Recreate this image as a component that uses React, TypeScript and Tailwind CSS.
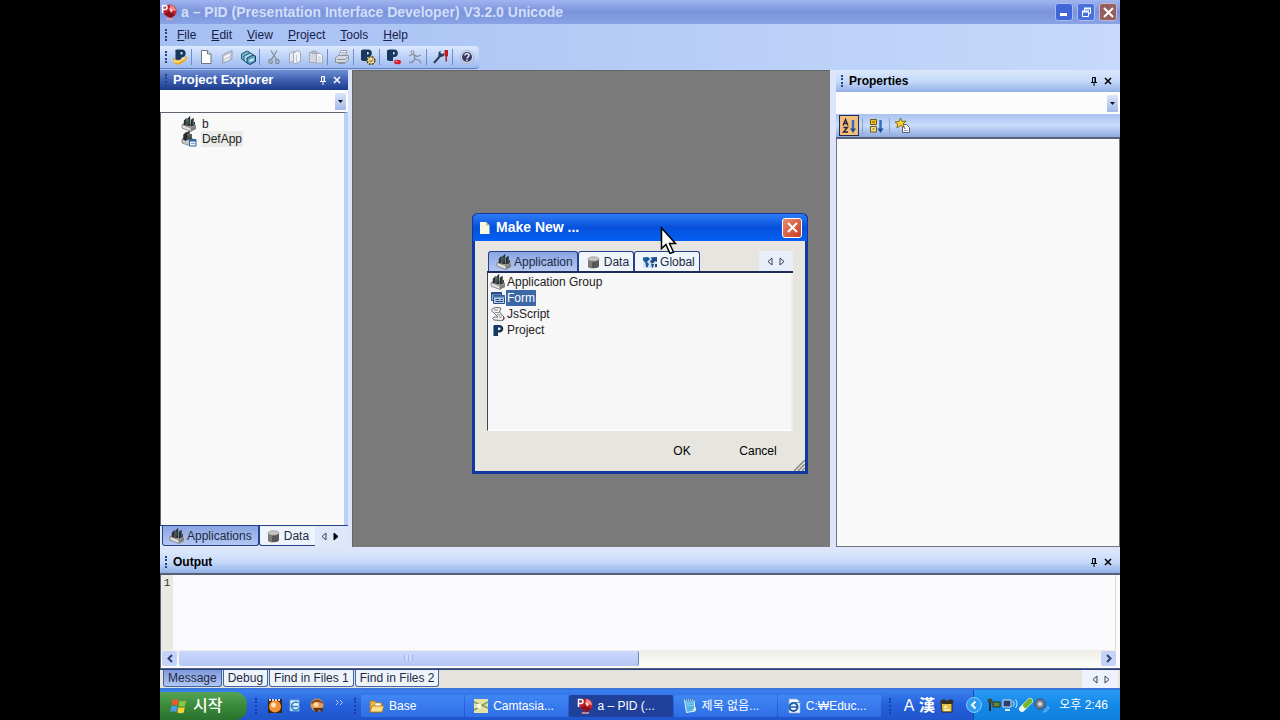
import { useState } from 'react'
import type { ReactNode } from 'react'
import clsx from 'clsx'

const MENUS = ['File', 'Edit', 'View', 'Project', 'Tools', 'Help']
const OUTPUT_TABS = ['Message', 'Debug', 'Find in Files 1', 'Find in Files 2']

function Svg({ children, size = 16 }: { children: ReactNode; size?: number }) {
  return (
    <svg width={size} height={size} viewBox="0 0 16 16" fill="none" className="shrink-0" aria-hidden="true">
      {children}
    </svg>
  )
}

// ---------- icons ----------

function PidIcon() {
  return (
    <Svg>
      <circle cx="9" cy="7" r="6.500" fill="#c4202c" />
      <path d="M9 1a6 6 0 0 1 6 6l-6-1z" fill="#f08a86" />
      <path d="M3 10l6-3 5 4-4 3z" fill="#8c0f1c" />
      <path d="M8 4l4 2-2 3z" fill="#fbd5d2" />
      <path d="M1.500 9V1.500H4a2 2 0 0 1 0 4H2" stroke="#fff" strokeWidth="1.500" />
      <path d="M5 15h7" stroke="#e9a0a0" strokeWidth="1.500" />
    </Svg>
  )
}

function PMark() {
  return (
    <path
      d="M1 1.500L3 .5h5.500c4.500 0 4.500 7.500 0 7.500H7v4H3L1 11zM7 3v2.500h1c1.300 0 1.300-2.500 0-2.500z"
      fill="#17375e"
      fillRule="evenodd"
    />
  )
}

function OpenProjectIcon() {
  return (
    <Svg>
      <path d="M1 8l3 3 6-1 4-3 1 2-3 4-6 3-4-2z" fill="#eda81c" />
      <path d="M2 12l4 1 7-4" stroke="#ffe38c" strokeWidth="1.500" />
      <path d="M3 1.500L5 .500h5c4.500 0 5 6.500 1 7.500L9 9v1.500L5 11 3 9.500zM8.500 3v2.500H10c1 0 1-2.500 0-2.500z" fill="#17375e" fillRule="evenodd" />
      <path d="M3.500 2v7.500" stroke="#5d87b8" />
    </Svg>
  )
}

function NewIcon() {
  return (
    <Svg>
      <path d="M3.500 1.500h6l3.500 3.500v9.500H3.500z" fill="#fff" stroke="#6c7486" />
      <path d="M9.500 1.500V5H13" fill="#dfe6f2" stroke="#6c7486" />
    </Svg>
  )
}

function SaveIcon() {
  return (
    <Svg>
      <path d="M3.500 6l9.500-4.500v8.500L3.500 14.500z" fill="#c3c8d4" stroke="#9da3b2" />
      <path d="M5 7.500l6-3v2.500l-6 3z" fill="#f3f5f9" />
      <path d="M5.500 12l5-2.500" stroke="#eef0f5" strokeWidth="1.500" />
    </Svg>
  )
}

function SaveAllIcon() {
  return (
    <Svg>
      <path d="M1.500 5L7 2l3 1.500V9l-5 3-3.500-2z" fill="#76b5cf" stroke="#1f5878" />
      <path d="M4 7l6-3 3 1.500V11l-5.500 3L4 12z" fill="#a8d8e8" stroke="#1f5878" />
      <path d="M7 9l6-3 2.500 1v5.500L10 15.500 7 14z" fill="#5aa3c2" stroke="#173f5c" />
      <path d="M9.500 11l4-2v2l-4 2z" fill="#e9f8fd" />
    </Svg>
  )
}

function CutIcon() {
  return (
    <Svg>
      <path d="M5 1.500l5.500 9M11 1.500l-5.500 9" stroke="#878c9b" strokeWidth="1.300" />
      <ellipse cx="4.500" cy="12.500" rx="1.700" ry="2" stroke="#878c9b" strokeWidth="1.300" />
      <ellipse cx="11.300" cy="12.500" rx="1.700" ry="2" stroke="#878c9b" strokeWidth="1.300" />
    </Svg>
  )
}

function CopyIcon() {
  return (
    <Svg>
      <path d="M2.500 4.500L7 2v9.500L2.500 14z" fill="#e4e8f0" stroke="#a3a8b6" />
      <path d="M6.500 4l4-2.500 3 2V12l-4.500 2.500H6.500z" fill="#f0f2f7" stroke="#a3a8b6" />
      <path d="M9.500 6v7" stroke="#c0c5d0" />
    </Svg>
  )
}

function PasteIcon() {
  return (
    <Svg>
      <path d="M1.500 3.500h8v10h-8z" fill="#d3d8e2" stroke="#a3a8b6" />
      <path d="M4 2h4v2.500H4z" fill="#b4b9c6" stroke="#a3a8b6" />
      <path d="M8.500 4.500h4l2 2v7.500h-6z" fill="#f5f6fa" stroke="#a3a8b6" />
      <path d="M10 8h3M10 10h3M10 12h3" stroke="#bdc2cd" />
    </Svg>
  )
}

function PrintIcon() {
  return (
    <Svg>
      <path d="M5 6.500L7 1.500h6l-1.500 5z" fill="#f5f6fa" stroke="#969baa" />
      <path d="M7.500 3.500h4M7 5h4" stroke="#a9aebb" />
      <path d="M1.500 9L4 6.500h10.500v4L12 13.500H1.500z" fill="#d3d8e2" stroke="#8f94a3" />
      <path d="M3 10.500h8.500l2-2.500" stroke="#8f94a3" />
      <path d="M4 14.500h7" stroke="#8f94a3" />
    </Svg>
  )
}

function PGearIcon() {
  return (
    <Svg>
      <PMark />
      <circle cx="11" cy="11.500" r="3.800" fill="#f0dc92" stroke="#54481f" strokeDasharray="2 1" strokeWidth="1.500" />
      <path d="M9.500 11.500l1.200 1.300L13 10.500" stroke="#54481f" />
    </Svg>
  )
}

function PStopIcon() {
  return (
    <Svg>
      <PMark />
      <ellipse cx="11.500" cy="13" rx="3.500" ry="2.300" fill="#d8202c" />
      <path d="M9.500 12.500h2" stroke="#f5a0a0" />
    </Svg>
  )
}

function RunIcon() {
  return (
    <Svg>
      <circle cx="5.500" cy="3" r="1.500" stroke="#8a90a0" />
      <path d="M2 7l4-2 4 2.500 4-1.500M7 6l1 4 4.500 1.500 1.500 3M8 10l-3 3.500H2" stroke="#8a90a0" strokeWidth="1.300" />
    </Svg>
  )
}

function ToolsIcon() {
  return (
    <Svg>
      <path d="M1 14L7.500 6.500" stroke="#2b3c5c" strokeWidth="2" />
      <path d="M5.500 7V3.500l2-2V4l1.500 1 2-1v2.500L9 8z" fill="#2b3c5c" />
      <path d="M11.500 1h3.500v6.500h-3.500z" fill="#c01c24" />
      <path d="M13.200 7.500v5" stroke="#8a2a30" strokeWidth="1.500" />
    </Svg>
  )
}

function HelpIcon() {
  return (
    <Svg>
      <circle cx="8" cy="8" r="6.500" fill="#dfe3f3" stroke="#a9b0cc" />
      <circle cx="8" cy="8" r="5" fill="#343a66" />
      <path d="M6 6.500C6 4 10 4 10 6.500 10 8 8 8 8 9.500M8 10.500V12" stroke="#fff" strokeWidth="1.400" />
    </Svg>
  )
}

function AppGroupIcon() {
  return (
    <Svg>
      <path d="M1 8l5-3 9 4v4l-5 2.500L1 12z" fill="#a9a9a9" />
      <path d="M1 8.500l9 3.500v3.500L1 12z" fill="#e2e2e2" stroke="#6f6f6f" strokeWidth=".7" />
      <path d="M10 12l5-3v4l-5 2.500z" fill="#808080" />
      <path d="M3.500 9V5L5 3.500V9.500M7 10V3l1.500-1.500V10M10.500 10.500V4L12 3v7" stroke="#252a2e" strokeWidth="1.400" />
      <path d="M13.500 6v3" stroke="#3a3f44" />
      <path d="M8 3v5" stroke="#2f7d4e" strokeWidth=".8" />
    </Svg>
  )
}

function DefAppIcon() {
  return (
    <Svg>
      <path d="M1 8l4-3 7 3v4l-4 2.500L1 12z" fill="#c6c6c6" stroke="#6f6f6f" strokeWidth=".7" />
      <path d="M3 9V4l1.500-1.500V10M6 9V2L8 1v8M10 8V3" stroke="#252a2e" strokeWidth="1.500" />
      <path d="M8.500 8.500h6.500v6.500H8.500z" fill="#e8f1fb" stroke="#36649c" />
      <path d="M8.500 9.500h6.500" stroke="#36649c" strokeWidth="2" />
      <path d="M10 12.500h4" stroke="#7ea7d8" />
    </Svg>
  )
}

function DataIcon() {
  return (
    <Svg>
      <path d="M2 5v7c0 3 11 3 11 0V5z" fill="#5a5856" />
      <path d="M2 5v7c0 1.500 2 2.300 4 2.300V6z" fill="#7d7b78" />
      <ellipse cx="7.500" cy="5" rx="5.500" ry="2.200" fill="#c9c6c0" stroke="#8f8f8f" strokeWidth=".7" />
    </Svg>
  )
}

function GlobalIcon() {
  return (
    <Svg>
      <path d="M1 3h14v11H1z" fill="#d4e6f8" />
      <path d="M1 3.500l5-.500 2 2-2 2-1 1 2 2-1.500 3.500L4 13 3.500 9 1 6z" fill="#1d5a9c" />
      <path d="M8.500 3.500L15 3v5l-2-1-1.500 2H9l-1-2 2-1.500zM9 9.500l3 .500-1 3.500-1 .500zM13 10h2v3h-2z" fill="#1c4a86" />
    </Svg>
  )
}

function FormIcon() {
  return (
    <Svg>
      <path d="M1.500 2.500h10v8h-10z" fill="#9dbadd" stroke="#294f86" />
      <path d="M1 3.500h11" stroke="#294f86" strokeWidth="2" />
      <path d="M3.500 5.500h11v8h-11z" fill="#b4cbe8" stroke="#294f86" />
      <path d="M3 6.500h12" stroke="#4673ad" strokeWidth="2" />
      <path d="M5.500 9.500h3.500M10.500 9.500H13M5.500 11.500H13" stroke="#294f86" />
    </Svg>
  )
}

function ScriptIcon() {
  return (
    <Svg>
      <path
        d="M3 2.500C5 1 9 1.500 11 2L9.500 6l4.500 5c1 3-2 4-4 3.500l-6-.500c-2-1-1-3 1-3h3L3 6C1 5 1.500 3 3 2.500z"
        fill="#f0f0f0"
        stroke="#6e6e6e"
      />
      <path d="M4 4h4M5 6.500h4M7 8.500l3.500.500M9 11h3" stroke="#8f8f8f" />
      <path d="M13 11c1.500 1 1 3-1 3.500" stroke="#444" />
    </Svg>
  )
}

function ProjectIcon() {
  return (
    <Svg>
      <path d="M4 3h5.500c5 0 5 7.500 0 7.500H8V14H4zM8 5.500V8h1.500c1.500 0 1.500-2.500 0-2.500z" fill="#17375e" fillRule="evenodd" />
      <path d="M4 3L3 4v10h1" fill="#6f8fb5" />
    </Svg>
  )
}

function SortIcon() {
  return (
    <Svg>
      <path d="M2 7.500L4.500 1.500 7 7.500M3 5.500h3M2.500 9.500h4L2.500 14h4.500" stroke="#2b2740" strokeWidth="1.400" />
      <path d="M12 2v9" stroke="#2e6fc0" strokeWidth="2.500" />
      <path d="M9 10.500h6L12 15z" fill="#1d4f9c" />
    </Svg>
  )
}

function CategoryIcon() {
  return (
    <Svg>
      <path d="M2.500 1.500h6v5h-6z" fill="#f2c21d" stroke="#735a12" />
      <path d="M4 4h3" stroke="#735a12" />
      <path d="M2.500 8.500h6v5.500h-6z" fill="#f4e08a" stroke="#735a12" />
      <path d="M4.500 11h2" stroke="#735a12" />
      <path d="M12.500 2v9" stroke="#2e6fc0" strokeWidth="2.500" />
      <path d="M9.500 10.500h6l-3 4.500z" fill="#1d4f9c" />
    </Svg>
  )
}

function StarPageIcon() {
  return (
    <Svg>
      <path d="M7.500 6.500h4l3 3v5h-7z" fill="#f6f8fc" stroke="#59617a" />
      <path d="M9 10.500h2M9 12.500h4" stroke="#9aa3b8" />
      <path d="M5.500 0l1.500 3.500 4-.500-3 3 1.500 3.500-4-2-3.500 2.500.500-4L0 4l4-.500z" fill="#f8d22c" stroke="#6b5710" strokeWidth=".8" />
    </Svg>
  )
}

function FolderIcon() {
  return (
    <Svg>
      <path d="M1 3h5l1.500 2H13v9H1z" fill="#e9b949" stroke="#a9741a" strokeWidth=".8" />
      <path d="M6 5h6v6H6z" fill="#fffbe8" stroke="#b99c56" strokeWidth=".7" />
      <path d="M3 8h12l-2 6H1z" fill="#fbe08c" stroke="#a9741a" strokeWidth=".8" />
    </Svg>
  )
}

function CamtasiaIcon() {
  return (
    <Svg>
      <path d="M1 1h14v14H1z" fill="#e6e2a4" />
      <path d="M1 4l14 6M1 12l14-8" stroke="#7f9f62" strokeWidth="1.500" />
      <circle cx="6" cy="8" r="2.500" fill="#fbf9dc" />
    </Svg>
  )
}

function NotepadIcon() {
  return (
    <Svg>
      <path d="M2.500 2h9.500l1 11-8.500 1.500z" fill="#55b4e6" stroke="#dff1fb" />
      <path d="M4 5h7M4.500 7.500h7" stroke="#8fd0f2" />
      <path d="M3 2h9" stroke="#3d5d74" strokeWidth="1.500" strokeDasharray="1 1" />
      <path d="M10 12l4-3v4z" fill="#e4f2c9" />
    </Svg>
  )
}

function ExplorerIcon() {
  return (
    <Svg>
      <path d="M3 1h8l3 3v11H3z" fill="#f4f8fd" stroke="#8fa7c4" strokeWidth=".7" />
      <circle cx="7.500" cy="9" r="4" stroke="#1a55a8" strokeWidth="2" />
      <path d="M4 9h7.500" stroke="#1a55a8" strokeWidth="1.500" />
      <path d="M1.500 13C2 8 8 3.500 14 4.500" stroke="#2b86d8" />
    </Svg>
  )
}

function Pin() {
  return (
    <svg width="8" height="9" viewBox="0 0 8 9" fill="none" aria-hidden="true">
      <path d="M2.500 5V.5h3V5M5 .5V5M1 5.500h6M4 5.500V9" stroke="currentColor" />
    </svg>
  )
}

function Cross() {
  return (
    <svg width="8" height="8" viewBox="0 0 8 8" fill="none" aria-hidden="true">
      <path d="M1 1l6 6M7 1L1 7" stroke="currentColor" strokeWidth="1.500" />
    </svg>
  )
}

function Triangle({ right, filled }: { right?: boolean; filled?: boolean }) {
  return (
    <svg width="6" height="9" viewBox="0 0 6 9" aria-hidden="true">
      <path
        d={right ? 'M1 1l4 3.500L1 8z' : 'M5 1L1 4.500 5 8z'}
        fill={filled ? '#000' : 'none'}
        stroke={filled ? '#000' : '#3a4055'}
      />
    </svg>
  )
}

function WindowsFlag() {
  return (
    <svg width="17" height="16" viewBox="0 0 17 16" aria-hidden="true">
      <path d="M2.500 2c2-1 4-1 6 0L7.500 7.500c-2-1-4-1-6 0z" fill="#f0582a" />
      <path d="M9.500 2.500c2 1 4 1 6.500 0L15 8c-2 1-4.500 1-6.500 0z" fill="#8cc63e" />
      <path d="M1.300 8.500c2-1 4-1 6 0L6.300 14c-2-1-4-1-6 0z" fill="#4a9cf0" />
      <path d="M8.300 9c2 1 4 1 6.500 0l-1 5.500c-2 1-4.500 1-6.500 0z" fill="#fbd030" />
    </svg>
  )
}

// ---------- shared pieces ----------

function Grip() {
  return <span className="h-3 shrink-0 border-l-2 border-dotted border-[#27408b]" />
}

function PanelHeader({ title, active }: { title: string; active?: boolean }) {
  return (
    <header
      className={clsx(
        'flex shrink-0 items-center pr-1 pl-[5px] font-bold',
        active
          ? 'h-5 bg-linear-to-b from-[#6f8fd2] via-[#3f60b0] to-[#1c3a8c] pr-[3px] text-[13px] text-white'
          : 'h-[22px] bg-linear-to-b from-[#dbe8fb] via-[#c6dafa] to-[#93b0e6] text-[12px] text-black',
      )}
    >
      <Grip />
      <h2 className="ml-1.5 flex-1">{title}</h2>
      <button aria-label={`Pin ${title}`} className="flex w-3 justify-center">
        <Pin />
      </button>
      <button aria-label={`Close ${title}`} className="flex w-4 justify-center">
        <Cross />
      </button>
    </header>
  )
}

function Combo({ label }: { label: string }) {
  return (
    <div className="relative h-[22px] shrink-0 bg-[#fcfcfd]">
      <select aria-label={label} className="h-full w-full appearance-none bg-transparent px-1 outline-none">
        <option />
      </select>
      <span className="pointer-events-none absolute top-[3px] right-0.5 bottom-0.5 flex w-[11px] items-center justify-center bg-linear-to-b from-[#dce6fb] to-[#a3b9ea]">
        <svg width="5" height="3" viewBox="0 0 5 3" aria-hidden="true">
          <path d="M0 0h5L2.500 3z" fill="#111" />
        </svg>
      </span>
    </div>
  )
}

const TOOLBAR = [
  [{ label: 'Open project', icon: <OpenProjectIcon /> }],
  [
    { label: 'New', icon: <NewIcon /> },
    { label: 'Save', icon: <SaveIcon /> },
    { label: 'Save all', icon: <SaveAllIcon /> },
  ],
  [
    { label: 'Cut', icon: <CutIcon /> },
    { label: 'Copy', icon: <CopyIcon /> },
    { label: 'Paste', icon: <PasteIcon /> },
  ],
  [{ label: 'Print', icon: <PrintIcon /> }],
  [{ label: 'Build', icon: <PGearIcon /> }],
  [
    { label: 'Stop', icon: <PStopIcon /> },
    { label: 'Run', icon: <RunIcon /> },
  ],
  [{ label: 'Options', icon: <ToolsIcon /> }],
  [{ label: 'About', icon: <HelpIcon /> }],
]

function TitleBar() {
  return (
    <header className="flex h-6 shrink-0 items-center bg-linear-to-b from-[#a0b4f0] via-[#7a93da] to-[#8aa4e6] pr-[3px] pl-px">
      <PidIcon />
      <h1 className="ml-1 flex-1 truncate text-[14px] font-bold text-[#d3defa]">
        a – PID (Presentation Interface Developer) V3.2.0 Unicode
      </h1>
      <div className="flex gap-1">
        <button
          aria-label="Minimize"
          className="flex h-[18px] w-[18px] items-end rounded-[3px] border border-[#a9bdf3] bg-[#4166d8] p-1"
        >
          <span className="h-[3px] w-[7px] bg-white" />
        </button>
        <button
          aria-label="Restore"
          className="flex h-[18px] w-[18px] items-center justify-center rounded-[3px] border border-[#a9bdf3] bg-[#4a70dc]"
        >
          <svg width="11" height="11" viewBox="0 0 11 11" fill="none" aria-hidden="true">
            <path d="M3.500 4V1.500h6v5H7.500M1.500 4.500h6v5h-6z" stroke="#fff" />
            <path d="M3 1.500h7M1 4.500h7" stroke="#fff" strokeWidth="2" />
          </svg>
        </button>
        <button
          aria-label="Close"
          className="flex h-[18px] w-[18px] items-center justify-center rounded-[3px] border border-[#cbb4cf] bg-[#94605f]"
        >
          <svg width="11" height="11" viewBox="0 0 11 11" aria-hidden="true">
            <path d="M1 1l9 9M10 1l-9 9" stroke="#fff" strokeWidth="2" />
          </svg>
        </button>
      </div>
    </header>
  )
}

function ProjectExplorer() {
  return (
    <section className="flex w-[188px] shrink-0 flex-col">
      <PanelHeader title="Project Explorer" active />
      <Combo label="Project" />
      <div className="flex-1 border-t border-r-4 border-l border-t-[#5e6470] border-r-[#bcd0f7] border-l-[#5e6470] bg-[#f9f9fa] pt-[3px] pl-5 text-[12px] text-[#222]">
        <ul>
          <li>
            <button className="flex h-[15px] items-center gap-1">
              <AppGroupIcon />
              <span className="px-px">b</span>
            </button>
          </li>
          <li>
            <button className="flex h-[15px] items-center gap-1">
              <DefAppIcon />
              <span className="bg-[#ecebe7] px-px leading-4">DefApp</span>
            </button>
          </li>
        </ul>
      </div>
      <div className="flex h-[22px] shrink-0 border-t border-[#27408b] bg-[#dfe7fa] pl-0.5 text-[12px]">
        <button className="flex h-5 items-center gap-0.5 rounded-b-[3px] border border-t-0 border-[#27408b] bg-linear-to-b from-[#8ba5e2] to-[#b3c7f3] px-1.5 text-[#222a44]">
          <AppGroupIcon />
          Applications
        </button>
        <button className="flex h-5 items-center gap-0.5 rounded-bl-[3px] border-b border-l border-[#27408b] bg-[#eef4fc] px-1.5 text-[#222a44]">
          <DataIcon />
          Data
        </button>
        <div className="flex flex-1 items-center gap-1.5 bg-[#dfe7fa] pl-1.5">
          <button aria-label="Previous tab">
            <Triangle />
          </button>
          <button aria-label="Next tab">
            <Triangle right filled />
          </button>
        </div>
      </div>
    </section>
  )
}

function Properties() {
  return (
    <section className="flex w-[284px] shrink-0 flex-col">
      <PanelHeader title="Properties" />
      <Combo label="Object" />
      <div className="flex h-[25px] shrink-0 items-center border-b-2 border-[#566078] bg-linear-to-b from-[#a9c2f0] via-[#c9dcfa] to-[#8eaadf] pl-[3px]">
        <button
          aria-label="Alphabetical"
          className="flex h-[21px] w-5 items-center justify-center border border-[#1f2b52] bg-[#f4bd7c]"
        >
          <SortIcon />
        </button>
        <span className="mx-[3px] h-4 w-px bg-[#8ca3cf]" />
        <button aria-label="Categorized" className="flex w-5 justify-center">
          <CategoryIcon />
        </button>
        <span className="mx-[3px] h-4 w-px bg-[#8ca3cf]" />
        <button aria-label="Property pages" className="flex w-5 justify-center">
          <StarPageIcon />
        </button>
      </div>
      <div className="flex-1 border border-t-0 border-[#70747c] bg-[#f9f9fa]" />
    </section>
  )
}

function Output() {
  const [tab, setTab] = useState('Message')

  return (
    <section className="flex shrink-0 flex-col">
      <PanelHeader title="Output" />
      <div className="border-t-2 border-b border-l border-[#566078] bg-[#faf9fb] pr-1 pb-0.5">
        <div className="flex h-[75px]">
          <div className="w-3 bg-[#e9e9e4] text-center font-['Liberation_Mono',monospace] text-[11px] leading-4 text-[#333]">
            1
          </div>
          <textarea
            aria-label="Output"
            readOnly
            className="flex-1 resize-none border-r border-[#dcdad2] bg-transparent px-1 text-[12px] outline-none"
          />
        </div>
        <div className="flex h-4 items-center bg-linear-to-b from-[#eeede5] to-[#fdfdfa] pl-px">
          <button
            aria-label="Scroll left"
            className="flex h-[15px] w-[15px] items-center justify-center rounded-xs bg-[#c5d2fa]"
          >
            <svg width="6" height="9" viewBox="0 0 6 9" fill="none" aria-hidden="true">
              <path d="M5 1L1.500 4.500 5 8" stroke="#33456e" strokeWidth="2" />
            </svg>
          </button>
          <div className="mx-0.5 flex h-full flex-1 items-center">
            <div className="flex h-[15px] w-1/2 items-center justify-center gap-px rounded-xs border-r border-[#6d86b8] bg-linear-to-b from-[#cbd8fd] to-[#b5c6f6]">
              <span className="h-1.5 w-px bg-[#a5b8ec]" />
              <span className="h-1.5 w-px bg-[#dbe5ff]" />
              <span className="h-1.5 w-px bg-[#a5b8ec]" />
              <span className="h-1.5 w-px bg-[#dbe5ff]" />
              <span className="h-1.5 w-px bg-[#a5b8ec]" />
            </div>
          </div>
          <button
            aria-label="Scroll right"
            className="flex h-[15px] w-[15px] items-center justify-center rounded-xs bg-[#c5d2fa]"
          >
            <svg width="6" height="9" viewBox="0 0 6 9" fill="none" aria-hidden="true">
              <path d="M1 1l3.500 3.500L1 8" stroke="#33456e" strokeWidth="2" />
            </svg>
          </button>
        </div>
      </div>
      <div className="flex h-[19px] gap-px border-t border-[#27408b] bg-[#e5e3dc] pr-0.5 pl-[3px] text-[12px] text-[#222a44]">
        {OUTPUT_TABS.map((name) => (
          <button
            key={name}
            onClick={() => setTab(name)}
            className={clsx(
              'h-[17px] rounded-b-[3px] border-r border-b border-l border-[#3d68a6] px-1 leading-4',
              name === tab ? 'bg-linear-to-b from-[#7f9adb] to-[#b3c7f3]' : 'bg-[#eff4fb]',
            )}
          >
            {name}
          </button>
        ))}
        <div className="ml-auto flex items-center gap-1.5 bg-[#eef2fc] pr-2 pl-2.5">
          <button aria-label="Previous output">
            <Triangle />
          </button>
          <button aria-label="Next output">
            <Triangle right />
          </button>
        </div>
      </div>
    </section>
  )
}

const DIALOG_TABS = [
  { name: 'Application', icon: <AppGroupIcon /> },
  { name: 'Data', icon: <DataIcon /> },
  { name: 'Global', icon: <GlobalIcon /> },
]

const DIALOG_ITEMS = [
  { name: 'Application Group', icon: <AppGroupIcon /> },
  { name: 'Form', icon: <FormIcon /> },
  { name: 'JsScript', icon: <ScriptIcon /> },
  { name: 'Project', icon: <ProjectIcon /> },
]

function MakeNewDialog() {
  const [tab, setTab] = useState('Application')
  const [selected, setSelected] = useState('Form')

  return (
    <div
      role="dialog"
      aria-labelledby="make-new-title"
      className="absolute top-[213px] left-1/2 w-[336px] -translate-x-1/2 rounded-t-md border-[3px] border-t-0 border-[#12389f] bg-[#e6e5df] text-[12px]"
    >
      <header className="-mx-[3px] flex h-7 items-center rounded-t-md border border-b-0 border-[#12389f] bg-linear-to-b from-[#2f7cf5] via-[#0550dc] to-[#0660f4] px-1">
        <svg width="16" height="14" viewBox="0 0 16 14" aria-hidden="true">
          <path d="M3 1h6l3.500 3.500V13H3z" fill="#f6f8e6" />
          <path d="M9 1v3.500h3.500z" fill="#b9c39a" />
        </svg>
        <h2 id="make-new-title" className="ml-[3px] flex-1 text-[14px] font-bold text-white">
          Make New ...
        </h2>
        <button
          aria-label="Close dialog"
          className="mr-px flex h-5 w-5 items-center justify-center rounded-[3px] border border-white bg-linear-to-br from-[#e88a6c] to-[#c8381c]"
        >
          <svg width="11" height="11" viewBox="0 0 11 11" aria-hidden="true">
            <path d="M1 1l9 9M10 1l-9 9" stroke="#fff" strokeWidth="2" />
          </svg>
        </button>
      </header>

      <div className="px-3 pt-2.5">
        <div className="flex items-end border-b-2 border-[#1d2c58] pl-px text-[#222a44]">
          {DIALOG_TABS.map(({ name, icon }) => (
            <button
              key={name}
              onClick={() => setTab(name)}
              className={clsx(
                'flex h-5 items-center gap-0.5 rounded-t-[3px] border border-b-0 border-[#27408b] pr-1 pl-[7px]',
                name === tab ? 'bg-linear-to-b from-[#8ba5e2] to-[#b3c7f3]' : 'bg-[#f0f4fb]',
              )}
            >
              {icon}
              {name}
            </button>
          ))}
          <div className="ml-auto flex h-5 items-center gap-1.5 bg-[#e9eefb] px-2">
            <button aria-label="Scroll tabs left">
              <Triangle />
            </button>
            <button aria-label="Scroll tabs right">
              <Triangle right />
            </button>
          </div>
        </div>
        <ul className="h-[158px] border-r-2 border-b border-l border-r-[#efeeea] border-b-white border-l-[#3e4658] bg-[#f7f7f8] pt-px pl-0.5">
          {DIALOG_ITEMS.map(({ name, icon }) => (
            <li key={name}>
              <button onClick={() => setSelected(name)} className="flex h-4 items-center">
                {icon}
                <span className={clsx('px-px leading-4', name === selected ? 'bg-[#3c68a8] text-white' : 'text-[#222]')}>
                  {name}
                </span>
              </button>
            </li>
          ))}
        </ul>
      </div>

      <footer className="relative flex h-10 items-center justify-end pr-[9px]">
        <button className="h-6 w-[76px]">OK</button>
        <button className="h-6 w-[76px]">Cancel</button>
        <svg width="11" height="11" viewBox="0 0 11 11" className="absolute right-0 bottom-0" aria-hidden="true">
          <path d="M0 11L11 0M4 11l7-7M8 11l3-3" stroke="#8a897f" strokeWidth="1.500" />
        </svg>
      </footer>
    </div>
  )
}

const TASKS = [
  { name: 'Base', icon: <FolderIcon /> },
  { name: 'Camtasia...', icon: <CamtasiaIcon /> },
  { name: 'a – PID (...', icon: <PidIcon />, active: true },
  { name: '제목 없음...', icon: <NotepadIcon /> },
  { name: 'C:₩Educ...', icon: <ExplorerIcon /> },
]

function Taskbar() {
  return (
    <footer className="flex h-8 shrink-0 items-end border-t-2 border-[#3a76dc] bg-linear-to-b from-[#3a80ee] via-[#2560dc] to-[#1f55cc] text-[12px] text-white">
      <button className="flex h-7 w-[87px] shrink-0 items-center gap-1.5 rounded-r-xl bg-linear-to-b from-[#57a457] via-[#3a8a3a] to-[#2a722e] pl-2.5 text-[16px] font-medium">
        <WindowsFlag />
        시작
      </button>
      <div className="flex h-7 w-[114px] shrink-0 items-center pl-2">
        <span className="h-4 border-l-2 border-dotted border-[#1a3f9f]" />
        <a href="#media" aria-label="Media player" className="ml-2.5">
          <Svg>
            <path d="M1 1h14v14H1z" fill="#3c2712" />
            <circle cx="8" cy="8.500" r="6" fill="#f29136" />
            <circle cx="6.500" cy="7" r="2.500" fill="#ffe4b8" />
            <path d="M2 2h12" stroke="#d8dde8" strokeWidth="2" strokeDasharray="2 1" />
          </Svg>
        </a>
        <a href="#mail" aria-label="Mail" className="ml-1">
          <Svg>
            <path d="M3 2h9v11H3z" fill="#e8f3fb" stroke="#6ba7cf" />
            <path d="M11 5a4 4 0 1 0 1 5M5 8.500h6" stroke="#2585c7" strokeWidth="1.500" />
          </Svg>
        </a>
        <a href="#messenger" aria-label="Messenger" className="ml-1.5">
          <Svg>
            <circle cx="8" cy="7" r="6.500" fill="#e59a52" />
            <path d="M2 6c1-6 11-6 12 0l-4-2z" fill="#8a4a18" />
            <path d="M4 10h10v4l-4-2-3 3z" fill="#5a3316" />
            <circle cx="7" cy="6.500" r="2.500" fill="#fbd9a8" />
          </Svg>
        </a>
        <button aria-label="More shortcuts" className="mb-2 ml-2.5">
          <svg width="9" height="5" viewBox="0 0 9 5" fill="none" aria-hidden="true">
            <path d="M1 0l2.500 2.500L1 5M5 0l2.500 2.500L5 5" stroke="#b9d3ff" />
          </svg>
        </button>
        <span className="ml-2.5 h-4 border-l-2 border-dotted border-[#1a3f9f]" />
      </div>
      <nav className="flex h-7 min-w-0 flex-1 items-center gap-px">
        {TASKS.map(({ name, icon, active }) => (
          <button
            key={name}
            className={clsx(
              'flex h-[22px] min-w-0 flex-1 items-center gap-1 rounded-xs pl-2 whitespace-nowrap',
              active ? 'bg-[#1f419c]' : 'bg-linear-to-b from-[#4086f4] to-[#2f6ee6]',
            )}
          >
            {icon}
            {name}
          </button>
        ))}
      </nav>
      <div className="flex h-7 w-[92px] shrink-0 items-center gap-0.5 pl-2">
        <span className="mr-2 h-4 border-l-2 border-dotted border-[#1a3f9f]" />
        <button className="w-4 text-[16px] font-medium">A</button>
        <button className="w-4 text-[16px] leading-4 font-bold">漢</button>
        <button aria-label="Input pad" className="ml-0.5">
          <Svg>
            <path d="M2 4h11v10H3z" fill="#e7c24c" stroke="#30280e" />
            <path d="M1 3l4-2 3 2 3-2 4 2-2 3H3z" fill="#3a3020" />
            <path d="M5 9h3M5 12h6" stroke="#fff7cf" strokeWidth="1.500" />
          </Svg>
        </button>
      </div>
      <div className="flex h-[30px] w-[147px] shrink-0 items-center border-l border-[#0f4fb0] bg-linear-to-b from-[#2a9af4] via-[#1389e8] to-[#1180dd] pr-3">
        <button aria-label="Show hidden icons" className="-ml-2">
          <Svg>
            <circle cx="8" cy="8" r="7.500" fill="#2f9df3" stroke="#a4d6fb" strokeWidth=".8" />
            <path d="M9.500 4.500L6 8l3.500 3.500" stroke="#fff" strokeWidth="2" />
          </Svg>
        </button>
        <span className="ml-1 flex">
          <Svg>
            <path d="M4 3v11" stroke="#2b2b1e" strokeWidth="2" />
            <circle cx="4" cy="4" r="2.500" fill="#3a4a3c" />
            <path d="M7 5h7v5H7z" fill="#6a8440" stroke="#2b331c" />
          </Svg>
          <Svg>
            <path d="M1 3h8v7H1z" fill="#27406e" stroke="#dbe6f6" />
            <path d="M3 13h5" stroke="#dbe6f6" strokeWidth="2" />
            <path d="M11 4c1.500 1.500 1.500 4 0 5.500M13.500 2.500c2 3 2 5.500 0 8.500" stroke="#e6f2ff" />
          </Svg>
          <Svg>
            <path d="M4 12l8-8" stroke="#f4f7e6" strokeWidth="6" strokeLinecap="round" />
            <path d="M7.500 8.500L12 4" stroke="#74b52c" strokeWidth="5" strokeLinecap="round" />
          </Svg>
          <Svg>
            <circle cx="6" cy="7" r="5" fill="#7b8294" stroke="#3f4656" />
            <circle cx="6" cy="7" r="2" fill="#d5dae6" />
            <path d="M10 13c2 0 4-2 4-4M9 15c4 0 6-3 6-5" stroke="#8ccaff" />
          </Svg>
        </span>
        <time className="ml-auto whitespace-nowrap">오후 2:46</time>
      </div>
    </footer>
  )
}

export default function App() {
  return (
    <div className="flex h-screen justify-center bg-black font-['Liberation_Sans','Noto_Sans_CJK_KR',sans-serif]">
      <div className="relative flex w-3/4 flex-col overflow-hidden bg-[#dde5fa]">
        <TitleBar />
        <div className="shrink-0 bg-linear-to-r from-[#a6c0f3] to-[#c6d9fa]">
          <nav className="flex h-[22px] items-center gap-2.5 pl-[5px] text-[12px] text-[#16204a]">
            <Grip />
            <div className="flex gap-[15px]">
              {MENUS.map((menu) => (
                <button key={menu}>
                  <span className="underline">{menu[0]}</span>
                  {menu.slice(1)}
                </button>
              ))}
            </div>
          </nav>
          <div className="flex h-6">
            <div className="flex h-[23px] items-center rounded-r-sm border-b border-[#6380bd] bg-linear-to-b from-[#dce9fd] to-[#9dbaf0] pr-0.5 pl-[5px]">
              <Grip />
              <div className="ml-0.5 flex items-center">
                {TOOLBAR.map((group, i) => (
                  <div key={i} className="flex items-center">
                    {i > 0 && <span className="mr-[3px] ml-px h-4 w-px bg-[#6f8cc6]" />}
                    {group.map(({ label, icon }) => (
                      <button key={label} aria-label={label} className="flex w-[21px] justify-center">
                        {icon}
                      </button>
                    ))}
                  </div>
                ))}
              </div>
            </div>
          </div>
        </div>

        <div className="flex min-h-0 flex-1 pb-1">
          <ProjectExplorer />
          <main className="mr-1.5 ml-1 flex-1 border-t border-l border-[#666] bg-[#7a7a7a]" />
          <Properties />
        </div>

        <Output />
        <Taskbar />
        <MakeNewDialog />

        {/* mouse pointer */}
        <svg
          width="17"
          height="28"
          viewBox="0 0 17 28"
          className="pointer-events-none absolute top-[226px] left-1/2 ml-5"
          aria-hidden="true"
        >
          <path d="M1.500 2v20.500l4.500-4 4 9 3.500-1.500-4-8.500h6z" fill="#fff" stroke="#000" strokeWidth="1.500" />
        </svg>
      </div>
    </div>
  )
}
